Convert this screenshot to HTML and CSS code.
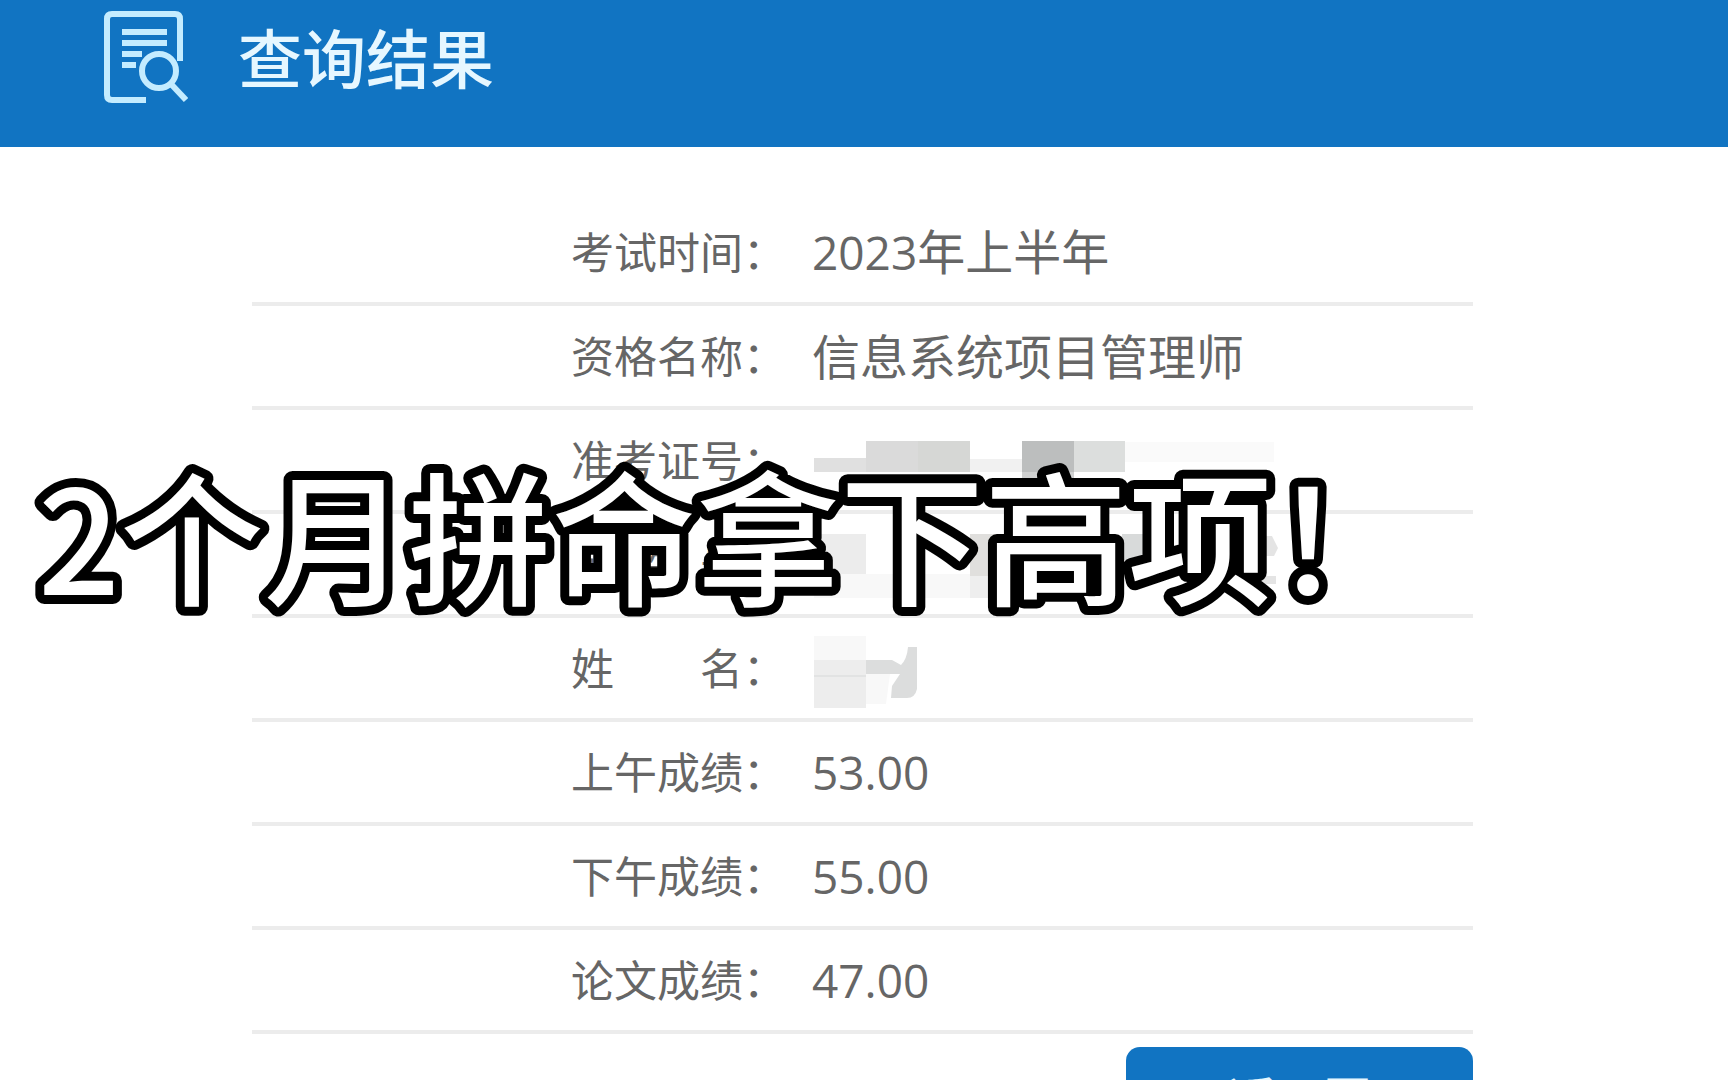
FILE: index.html
```html
<!DOCTYPE html>
<html lang="zh-CN">
<head>
  <meta charset="UTF-8">
  <title>查询结果</title>
  <meta name="viewport" content="width=device-width, initial-scale=1.0">
  <link rel="stylesheet" href="styles.css">
</head>
<body>
  <header class="topbar">
    <svg class="topbar-icon" viewBox="0 0 88 96" fill="none" stroke="currentColor" stroke-width="6" aria-hidden="true">
      <path d="M46 92H12Q7 92 7 87V11Q7 6 12 6H75Q80 6 80 11V53"/>
      <path d="M22 24H67M22 35H67M22 46H42M22 57H36"/>
      <circle cx="59" cy="63" r="17"/>
      <path d="M71 76L86 92"/>
    </svg>
    <h1>查询结果</h1>
  </header>

  <main class="result">
    <table>
      <tbody>
        <tr><th scope="row">考试时间：</th><td><span class="num">2023</span>年上半年</td></tr>
        <tr><th scope="row">资格名称：</th><td>信息系统项目管理师</td></tr>
        <tr>
          <th scope="row">准考证号：</th>
          <td>
            <svg class="mosaic" viewBox="0 -2 520 80" aria-hidden="true">
              <path fill="#fafafa" d="M312 22h150v20H312z"/>
              <path fill="#e0e0e0" d="M2 38h52v14H2z"/>
              <path fill="#dadada" d="M54 21h52v31H54z"/>
              <path fill="#d6d7d5" d="M106 21h52v31h-52z"/>
              <path fill="#f1f1f1" d="M158 39h52v13h-52z"/>
              <path fill="#bcbebe" d="M210 21h52v31h-52z"/>
              <path fill="#d0d1d1" d="M210 52h52v7h-52z"/>
              <path fill="#dcdedd" d="M262 21h51v31h-51z"/>
            </svg>
          </td>
        </tr>
        <tr>
          <th scope="row">证&ensp;件&ensp;号：</th>
          <td>
            <svg class="mosaic" viewBox="0 -2 520 80" aria-hidden="true">
              <path fill="#ececec" d="M2 10h52v40H2z"/>
              <path fill="#f8f8f8" d="M2 50h156v24H2z"/>
              <path fill="#e0dfdd" d="M158 10h52v42h-52z"/>
              <path fill="#eeeeee" d="M158 52h52v22h-52z"/>
              <path fill="#d8dada" d="M310 10h52v26h-52z"/>
              <path fill="#e4e4e4" d="M450 12h10l6 12-4 8h-12zM450 52h14v8h-14z"/>
            </svg>
          </td>
        </tr>
        <tr>
          <th scope="row">姓　　名：</th>
          <td>
            <svg class="mosaic" viewBox="0 -2 520 80" aria-hidden="true">
              <path fill="#f8f8f8" d="M2 8h52v24H2zM54 46h24l-4 30H54z"/>
              <path fill="#ededed" d="M2 32h52v48H2z"/>
              <path fill="#e2e3e3" d="M2 47h52v2H2z"/>
              <path fill="#dcdddd" d="M54 32h26l9 5q6-6 7-18h9v42q-2 9-10 9H79l1-12 8-12H54z"/>
            </svg>
          </td>
        </tr>
        <tr><th scope="row">上午成绩：</th><td><span class="num">53.00</span></td></tr>
        <tr><th scope="row">下午成绩：</th><td><span class="num">55.00</span></td></tr>
        <tr><th scope="row">论文成绩：</th><td><span class="num">47.00</span></td></tr>
      </tbody>
    </table>
    <button class="btn-back" type="button">返　回</button>
  </main>

  <svg class="caption">
    <text x="38" y="150">2个月拼命拿下高项！</text>
  </svg>
</body>
</html>
```

FILE: styles.css
```css
body {
  margin: 0;
  height: 100vh;
  overflow: hidden;
  background-color: #fff;
  color: #666;
  font-family: "Noto Sans CJK SC", sans-serif;
}

.topbar {
  display: flex;
  align-items: flex-start;
  gap: 50px;
  box-sizing: border-box;
  height: 147px;
  padding: 8px 100px;
  background-color: #1174c2;
  color: #e6f7ff;
}

.topbar-icon {
  width: 88px;
  height: 96px;
  color: #c4ecff;
}

h1 {
  margin: 0;
  font-size: 64px;
  font-weight: 500;
  line-height: 94px;
}

.result {
  margin: 55px 255px 0 252px;
}

table {
  width: 100%;
  border-collapse: collapse;
}

th, td {
  height: 96px;
  padding: 0 0 4px;
  border-bottom: 4px solid #ececec;
  text-align: left;
  font-weight: 400;
  line-height: 64px;
}

th {
  width: 560px;
  height: 100px;
  box-sizing: border-box;
  padding-right: 26px;
  font-size: 43px;
  text-align: right;
  white-space: nowrap;
}

td {
  font-size: 48px;
}

.num {
  font-family: "Open Sans", sans-serif;
  font-size: 46px;
  font-weight: 500;
}

.mosaic {
  display: block;
  width: 520px;
  height: 80px;
  overflow: visible;
}

.btn-back {
  display: block;
  width: 347px;
  height: 98px;
  margin: 13px 0 0 auto;
  border: 0;
  border-radius: 14px;
  background-color: #1174c2;
  color: #e6f7ff;
  font-family: inherit;
  font-size: 48px;
}

/* headline lies over the result table */
.caption {
  position: absolute;
  top: 445px;
  left: 0;
  width: 100%;
  height: 216px;
  fill: #fff;
  stroke: #000;
  stroke-width: 18px;
  stroke-linejoin: round;
  paint-order: stroke;
  font-size: 144px;
  font-weight: 500;
}
```
